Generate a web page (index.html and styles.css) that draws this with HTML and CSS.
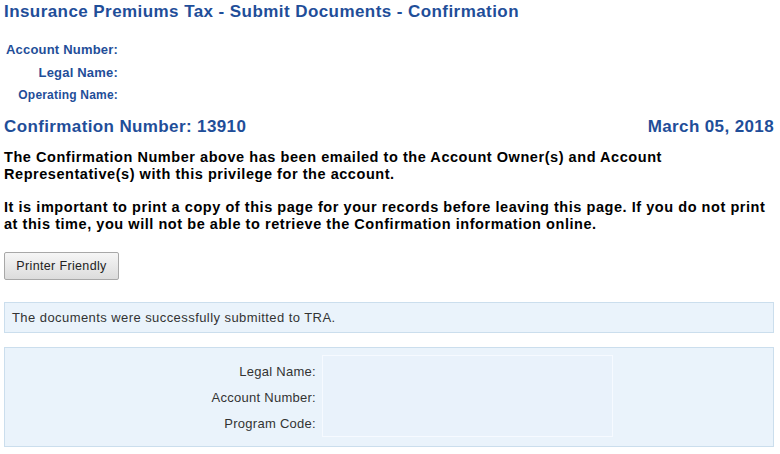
FILE: index.html
```html
<!DOCTYPE html>
<html lang="en">
<head>
<meta charset="utf-8">
<title>Insurance Premiums Tax - Submit Documents - Confirmation</title>
<link rel="stylesheet" href="styles.css">
</head>
<body>
<div class="page">
  <h1 class="page-title">Insurance Premiums Tax - Submit Documents - Confirmation</h1>

  <div class="account-info">
    <div class="account-label">Account Number:</div>
    <div class="account-value"></div>
    <div class="account-label">Legal Name:</div>
    <div class="account-value"></div>
    <div class="account-label account-label-small">Operating Name:</div>
    <div class="account-value"></div>
  </div>

  <div class="confirm-row">
    <span>Confirmation Number: 13910</span>
    <span>March 05, 2018</span>
  </div>

  <p class="notice">The Confirmation Number above has been emailed to the Account Owner(s) and Account<br>Representative(s) with this privilege for the account.</p>
  <p class="notice notice-second">It is important to print a copy of this page for your records before leaving this page. If you do not print<br>at this time, you will not be able to retrieve the Confirmation information online.</p>

  <button class="btn" type="button">Printer Friendly</button>

  <div class="message-box">The documents were successfully submitted to TRA.</div>

  <div class="info-box">
    <div class="info-labels">
      <div class="info-label">Legal Name:</div>
      <div class="info-label">Account Number:</div>
      <div class="info-label">Program Code:</div>
    </div>
    <div class="info-values"></div>
  </div>
</div>
</body>
</html>
```

FILE: styles.css
```css
html, body {
  margin: 0;
  padding: 0;
  background: #ffffff;
}

body {
  font-family: "Liberation Sans", Arial, sans-serif;
  color: #000;
}

.page {
  padding: 2px 6px 0 4px;
}

.page-title {
  margin: 0;
  font-size: 17px;
  line-height: 20px;
  font-weight: bold;
  letter-spacing: 0.43px;
  color: #1f4e99;
}

.account-info {
  margin-top: 16px;
  display: grid;
  grid-template-columns: 114px 1fr;
  grid-auto-rows: 23px;
  font-size: 13px;
  line-height: 23px;
  font-weight: bold;
  letter-spacing: 0.2px;
  color: #1f4e99;
}

.account-label {
  text-align: right;
}

.account-label-small {
  font-size: 12px;
}

.confirm-row {
  margin-top: 10px;
  display: flex;
  justify-content: space-between;
  font-size: 17px;
  line-height: 20px;
  font-weight: bold;
  letter-spacing: 0.38px;
  color: #1f4e99;
}

.notice {
  margin: 12px 0 0;
  font-size: 14.5px;
  line-height: 17px;
  font-weight: bold;
  letter-spacing: 0.55px;
  white-space: nowrap;
}

.notice-second {
  margin-top: 16px;
}

.btn {
  display: block;
  margin-top: 19px;
  width: 115px;
  height: 28px;
  padding: 0;
  font-family: "Liberation Sans", Arial, sans-serif;
  font-size: 12.5px;
  letter-spacing: 0.35px;
  color: #222;
  background: linear-gradient(#f6f6f6, #dcdcdc);
  border: 1px solid #a8a8a8;
  border-radius: 2px;
}

.message-box {
  margin-top: 22px;
  height: 29px;
  padding-left: 7px;
  font-size: 13px;
  line-height: 29px;
  letter-spacing: 0.43px;
  color: #333;
  background: #eaf3fb;
  border: 1px solid #cbdeed;
}

.info-box {
  margin-top: 14px;
  display: flex;
  gap: 6px;
  padding: 7px 7px 9px;
  background: #eaf3fb;
  border: 1px solid #cbdeed;
  height: 82px;
}

.info-labels {
  width: 304px;
  padding-top: 4px;
  font-size: 13px;
  letter-spacing: 0.27px;
  color: #333;
}

.info-label {
  height: 26px;
  line-height: 26px;
  text-align: right;
}

.info-values {
  width: 289px;
  height: 80px;
  border: 1px solid #f6faff;
  background: #e9f2fb;
}
```
